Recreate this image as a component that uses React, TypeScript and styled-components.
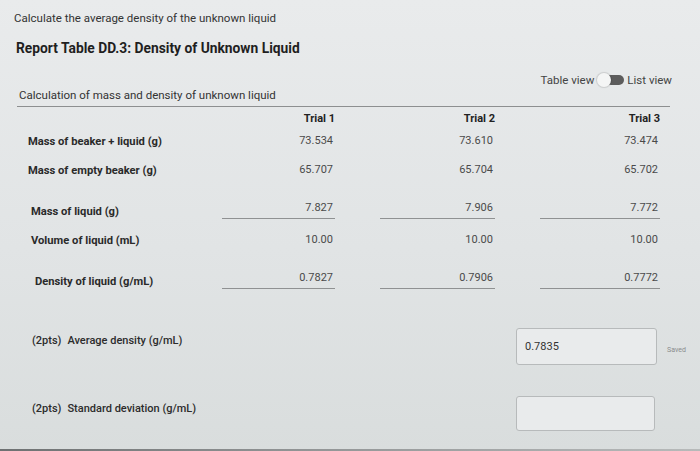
import React from "react";
import styled, { createGlobalStyle } from "styled-components";

const GlobalStyle = createGlobalStyle`
  html, body {
    margin: 0;
    padding: 0;
  }
  body {
    font-family: Roboto, "Liberation Sans", Arial, sans-serif;
    background: #e2e5e6;
  }
`;

interface RowData {
  label: string;
  values: string[];
  underline?: boolean;
  gap: number;
  indent: number;
}

const rows: RowData[] = [
  { label: "Mass of beaker + liquid (g)", values: ["73.534", "73.610", "73.474"], gap: 3, indent: 0 },
  { label: "Mass of empty beaker (g)", values: ["65.707", "65.704", "65.702"], gap: 9, indent: 0 },
  { label: "Mass of liquid (g)", values: ["7.827", "7.906", "7.772"], gap: 20, indent: 3, underline: true },
  { label: "Volume of liquid (mL)", values: ["10.00", "10.00", "10.00"], gap: 10, indent: 3 },
  { label: "Density of liquid (g/mL)", values: ["0.7827", "0.7906", "0.7772"], gap: 20, indent: 7, underline: true },
];

const Toggle = () => (
  <Switch>
    <Track />
    <Knob />
  </Switch>
);

const App = () => {
  return (
    <Page>
      <GlobalStyle />
      <Prompt>Calculate the average density of the unknown liquid</Prompt>
      <Title>Report Table DD.3: Density of Unknown Liquid</Title>
      <ViewBar>
        <ViewLabel>Table view</ViewLabel>
        <Toggle />
        <ViewLabel>List view</ViewLabel>
      </ViewBar>
      <Caption>Calculation of mass and density of unknown liquid</Caption>
      <Table>
        <Row $gap={0}>
          <span />
          <Head>Trial 1</Head>
          <Head>Trial 2</Head>
          <Head>Trial 3</Head>
        </Row>
        {rows.map((r) => (
          <Row key={r.label} $gap={r.gap}>
            <Label $indent={r.indent} $low={r.underline}>
              {r.label}
            </Label>
            {r.values.map((v, i) => (
              <Value key={i} $underline={r.underline}>
                {v}
              </Value>
            ))}
          </Row>
        ))}
      </Table>
      <Answers>
        <AnswerRow>
          <AnswerLabel>
            <Pts>(2pts)</Pts>Average density (g/mL)
          </AnswerLabel>
          <InputBox>0.7835</InputBox>
          <Saved>Saved</Saved>
        </AnswerRow>
        <AnswerRow $offset={2}>
          <AnswerLabel>
            <Pts>(2pts)</Pts>Standard deviation (g/mL)
          </AnswerLabel>
          <InputBox $narrow />
          <Saved />
        </AnswerRow>
      </Answers>
      <BottomEdge />
    </Page>
  );
};

export default App;

const Page = styled.div`
  width: 700px;
  height: 451px;
  box-sizing: border-box;
  padding: 10px 0 0 14px;
  background: linear-gradient(180deg, #e9ebec 0%, #e1e4e5 55%, #d9dddd 100%);
  display: flex;
  flex-direction: column;
  overflow: hidden;
  position: relative;
`;

const Prompt = styled.div`
  font-size: 11.5px;
  color: #333;
  line-height: 16px;
`;

const Title = styled.h1`
  margin: 13px 0 0 2px;
  font-size: 13.8px;
  font-weight: 700;
  color: #1f1f1f;
  line-height: 18px;
`;

const ViewBar = styled.div`
  display: flex;
  align-items: center;
  justify-content: flex-end;
  gap: 3px;
  margin: 15px 28px 0 0;
  height: 16px;
`;

const ViewLabel = styled.span`
  font-size: 11.5px;
  color: #444;
`;

const Switch = styled.div`
  position: relative;
  width: 27px;
  height: 14px;
`;

const Track = styled.div`
  position: absolute;
  left: 9px;
  top: 2px;
  width: 18px;
  height: 10px;
  border-radius: 5px;
  background: #5c5c5c;
`;

const Knob = styled.div`
  position: absolute;
  left: 0;
  top: 0;
  width: 14px;
  height: 14px;
  border-radius: 50%;
  background: #f4f5f5;
  box-shadow: 0 0 1px 1px rgba(0, 0, 0, 0.12);
`;

const Caption = styled.div`
  margin: 0 30px 0 3px;
  padding: 0 0 3px 2px;
  font-size: 11.5px;
  color: #333;
  line-height: 15px;
  border-bottom: 1.5px solid #8d8f90;
`;

const Table = styled.div`
  display: flex;
  flex-direction: column;
  padding: 1px 0 0 14px;
`;

const Row = styled.div<{ $gap: number }>`
  display: grid;
  grid-template-columns: 149px 113px 115px 120px;
  column-gap: 45px;
  align-items: center;
  height: 20px;
  margin-top: ${(p) => p.$gap}px;
`;

const Head = styled.div`
  text-align: right;
  font-size: 11px;
  font-weight: 700;
  color: #222;
`;

const Label = styled.div<{ $indent: number; $low?: boolean }>`
  padding-left: ${(p) => p.$indent}px;
  padding-top: ${(p) => (p.$low ? "2px" : "0")};
  font-size: 11.2px;
  font-weight: 700;
  color: #2a2a2a;
  white-space: nowrap;
`;

const Value = styled.div<{ $underline?: boolean }>`
  text-align: right;
  font-size: 11px;
  color: #4a4a4a;
  padding: ${(p) => (p.$underline ? "0 2px 4px 0" : "0 2px 0 0")};
  margin-top: ${(p) => (p.$underline ? "-1px" : "0")};
  border-bottom: 1.5px solid ${(p) => (p.$underline ? "#8f9192" : "transparent")};
`;

const Answers = styled.div`
  display: flex;
  flex-direction: column;
  gap: 31px;
  margin-top: 38px;
`;

const AnswerRow = styled.div<{ $offset?: number }>`
  display: grid;
  grid-template-columns: 484px 141px 44px;
  align-items: start;
  padding-left: ${(p) => 18 + (p.$offset ?? 0)}px;
  margin-left: ${(p) => -(p.$offset ?? 0)}px;
`;

const AnswerLabel = styled.div`
  padding-top: 6px;
  font-size: 11px;
  color: #2c2c2c;
  font-weight: 500;
`;

const Pts = styled.span`
  margin-right: 6px;
`;

const InputBox = styled.div<{ $narrow?: boolean }>`
  box-sizing: border-box;
  width: ${(p) => (p.$narrow ? "139px" : "141px")};
  height: ${(p) => (p.$narrow ? "35px" : "37px")};
  border: 1.5px solid #b7babb;
  border-radius: 3px;
  background: #e9ebec;
  padding: 11px 0 0 8px;
  font-size: 11px;
  color: #333;
`;

const Saved = styled.div`
  padding: 18px 0 0 10px;
  font-size: 7px;
  color: #8a8c8d;
`;

const BottomEdge = styled.div`
  position: absolute;
  left: 0;
  right: 0;
  bottom: 0;
  height: 2px;
  background: linear-gradient(90deg, #6e7172 0%, #8f9293 40%, #b7baba 100%);
`;
